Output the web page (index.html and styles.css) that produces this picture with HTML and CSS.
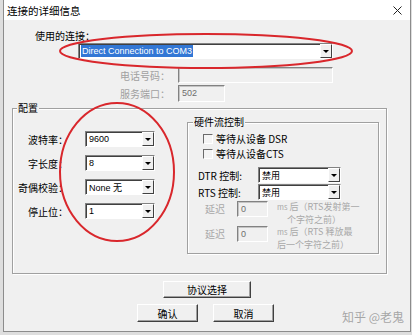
FILE: index.html
```html
<!DOCTYPE html>
<html lang="zh">
<head>
  <meta charset="UTF-8">
  <title>连接的详细信息</title>
  <link rel="stylesheet" href="styles.css">
</head>
<body>

<div class="screen">
  <div class="window">
    <div class="titlebar">
      <span class="title">连接的详细信息</span>
      <svg class="close" width="9" height="9" viewBox="0 0 9 9"><path d="M0.5 0.5L8.5 8.5M8.5 0.5L0.5 8.5" stroke="#222" stroke-width="1"/></svg>
    </div>

    <div class="client">
      <div class="conn-label">使用的连接：</div>
      <div class="combo combo-conn"><span class="sel">Direct Connection to COM3</span><span class="drop"></span></div>

      <div class="field-row phone">
        <span class="flabel">电话号码：</span>
        <div class="edit edit-phone"></div>
      </div>
      <div class="field-row port">
        <span class="flabel">服务端口：</span>
        <div class="edit edit-port">502</div>
      </div>

      <!-- 配置 -->
      <div class="group group-config">
        <div class="group-title">配置</div>
        <div class="config-body">
          <div class="serial">
            <div class="srow"><span class="slabel">波特率：</span><div class="combo combo-s"><span class="val">9600</span><span class="drop"></span></div></div>
            <div class="srow"><span class="slabel">字长度：</span><div class="combo combo-s"><span class="val">8</span><span class="drop"></span></div></div>
            <div class="srow"><span class="slabel">奇偶校验：</span><div class="combo combo-s"><span class="val">None 无</span><span class="drop"></span></div></div>
            <div class="srow"><span class="slabel">停止位：</span><div class="combo combo-s"><span class="val">1</span><span class="drop"></span></div></div>
          </div>

          <div class="group group-hw">
            <div class="group-title">硬件流控制</div>
            <div class="check first"><span class="box"></span>等待从设备 DSR</div>
            <div class="check"><span class="box"></span>等待从设备CTS</div>
            <div class="hrow dtr"><span class="hlabel">DTR 控制:</span><div class="combo combo-h"><span class="val">禁用</span><span class="drop"></span></div></div>
            <div class="hrow rts"><span class="hlabel">RTS 控制:</span><div class="combo combo-h"><span class="val">禁用</span><span class="drop"></span></div></div>
            <div class="delay d1">
              <span class="dlabel">延迟</span>
              <div class="edit edit-delay">0</div>
              <span class="dnote"><small>ms</small> 后（RTS发射第一<br><span class="indent">个字符之前）</span></span>
            </div>
            <div class="delay d2">
              <span class="dlabel">延迟</span>
              <div class="edit edit-delay">0</div>
              <span class="dnote"><small>ms</small> 后（RTS 释放最<br>后一个字符之前）</span>
            </div>
          </div>
        </div>
      </div>

      <button class="btn btn-proto">协议选择</button>

      <div class="btn-row">
        <button class="btn btn-ok">确认</button>
        <button class="btn btn-cancel">取消</button>
        <span class="watermark">知乎 @老鬼</span>
      </div>
    </div>
  </div>

  <!-- 红圈标注 -->
  <svg class="marks" width="412" height="335" viewBox="0 0 412 335">
    <ellipse cx="206" cy="51" rx="146" ry="17" fill="none" stroke="#d9272c" stroke-width="2"/>
    <ellipse cx="117" cy="172" rx="57" ry="69" fill="none" stroke="#d9272c" stroke-width="2"/>
  </svg>
</div>

</body>
</html>
```

FILE: styles.css
```css
* {
  box-sizing: border-box;
}

body {
  margin: 0;
  font-family: "Noto Sans CJK SC", sans-serif;
  font-size: 10px;
  color: #000;
}

.screen {
  position: relative;
  width: 412px;
  height: 335px;
  background: #dedede;
  display: flex;
  overflow: hidden;
}

.window {
  margin-left: 3px;
  width: 408px;
  height: 332px;
  border: 1px solid #8c8c8c;
  border-top: 0;
  display: flex;
  flex-direction: column;
  background: #f0f0f0;
}

.titlebar {
  height: 20px;
  background: #fff;
  display: flex;
  align-items: center;
  padding: 0 8px 0 3px;
  font-size: 10.5px;
}

.title {
  flex: 1;
}

.client {
  flex: 1;
  display: flex;
  flex-direction: column;
  align-items: flex-start;
}

.conn-label {
  margin: 9px 0 0 31px;
  line-height: 14px;
}

/* combobox / edit */
.combo {
  display: flex;
  align-items: center;
  height: 16px;
  background: #fff;
  border: 1px solid;
  border-color: #828282 #fff #fff #828282;
  box-shadow: inset 1px 1px #404040;
  padding-left: 2px;
  font-family: "Liberation Sans", "Noto Sans CJK SC", sans-serif;
  font-size: 9px;
}

.combo .val {
  flex: 1;
  padding-left: 1px;
}

.drop {
  margin-left: auto;
  width: 12px;
  height: 14px;
  background: #f0f0f0;
  border: 1px solid;
  border-color: #fff #404040 #404040 #fff;
  display: flex;
  align-items: center;
  justify-content: center;
}

.drop::after {
  content: "";
  border-left: 3px solid transparent;
  border-right: 3px solid transparent;
  border-top: 3px solid #000;
}

.combo-conn {
  margin-left: 74px;
  width: 255px;
}

.sel {
  background: #3277d5;
  color: #fff;
  padding: 0 1px;
  line-height: 12px;
}

.field-row {
  display: flex;
  align-items: center;
  margin-left: 116px;
}

.phone {
  margin-top: 8px;
}

.port {
  margin-top: 2px;
}

.flabel {
  width: 58px;
  color: #a0a0a0;
}

.edit {
  height: 16px;
  border: 1px solid;
  border-color: #828282 #fff #fff #828282;
  box-shadow: inset 1px 1px #c4c4c4;
  background: #f0f0f0;
  padding-left: 3px;
  font-family: "Liberation Sans", sans-serif;
  font-size: 9px;
  line-height: 14px;
  color: #6d6d6d;
}

.edit-phone {
  width: 155px;
}

.edit-port {
  width: 47px;
  height: 17px;
}

/* group box */
.group {
  border: 1px solid #a0a0a0;
  box-shadow: 1px 1px 0 #fff, inset 1px 1px 0 #fff;
}

.group-title {
  margin: -8px 0 0 4px;
  padding: 0 1px;
  background: #f0f0f0;
  line-height: 14px;
  width: fit-content;
}

.group-config {
  margin: 6px 0 0 8px;
  width: 375px;
  height: 166px;
}

.config-body {
  display: flex;
  align-items: flex-start;
}

.serial {
  width: 174px;
  margin-top: 16px;
  display: flex;
  flex-direction: column;
  gap: 8px;
}

.srow {
  display: flex;
  align-items: center;
}

.slabel {
  width: 55px;
  text-align: right;
}

.combo-s {
  margin-left: 17px;
  width: 70px;
}

.group-hw {
  margin-top: 7px;
  width: 192px;
  height: 132px;
}

.group-hw .group-title {
  margin-left: 5px;
}

.check {
  display: flex;
  align-items: center;
  margin-left: 15px;
  line-height: 15px;
}

.check.first {
  margin-top: 2px;
}

.box {
  width: 10px;
  height: 10px;
  margin-right: 3px;
  border: 1px solid;
  border-color: #6a6a6a #fff #fff #6a6a6a;
  background: #f4f4f4;
}

.hrow {
  display: flex;
  align-items: center;
  margin-left: 10px;
}

.dtr {
  margin-top: 6px;
}

.rts {
  margin-top: 1px;
}

.hlabel {
  width: 60px;
}

.combo-h {
  width: 83px;
}

.delay {
  display: flex;
  align-items: flex-start;
  margin-left: 17px;
  color: #a8a8a8;
}

.d1 {
  margin-top: 1px;
}

.dlabel {
  width: 32px;
  line-height: 16px;
}

.edit-delay {
  width: 31px;
}

.dnote {
  margin-left: 9px;
  font-size: 9px;
  line-height: 12.5px;
}

.dnote small {
  font-size: 7.5px;
}

.indent {
  padding-left: 10px;
}

/* buttons */
.btn {
  height: 18px;
  padding: 0;
  background: #f0f0f0;
  border: 1px solid;
  border-color: #fff #404040 #404040 #fff;
  box-shadow: inset -1px -1px #a0a0a0;
  font-family: "Noto Sans CJK SC", sans-serif;
  font-size: 10px;
  color: #000;
}

.btn-proto {
  margin: 7px 0 0 159px;
  width: 88px;
  height: 17px;
}

.btn-row {
  display: flex;
  align-items: flex-start;
  width: 100%;
  margin-top: 6px;
  padding-left: 133px;
}

.btn-ok,
.btn-cancel {
  width: 61px;
}

.btn-cancel {
  margin-left: 15px;
}

.watermark {
  margin: 6px 6px 0 auto;
  font-size: 12px;
  line-height: 14px;
  color: rgba(140, 140, 140, 0.75);
}

.marks {
  position: absolute;
  left: 0;
  top: 0;
  pointer-events: none;
}
```
